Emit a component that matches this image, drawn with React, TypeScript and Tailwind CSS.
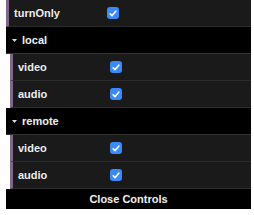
import React from 'react'

function Check() {
  return (
    <div className="w-[12px] h-[12px] rounded-[3px] bg-[#3b8af7] flex items-center justify-center">
      <svg width="8" height="7" viewBox="0 0 8 7" fill="none">
        <path d="M1.2 3.8 L3.1 5.6 L6.8 1.2" stroke="white" strokeWidth="1.6" strokeLinecap="round" strokeLinejoin="round" />
      </svg>
    </div>
  )
}

function BoolRow({ label }: { label: string }) {
  return (
    <div className="h-[27px] flex items-center bg-[#1a1a1a] border-b border-b-[#2c2c2c] border-l-[3px] border-l-[#806787] pl-[5px] pr-[4px]">
      <span className="w-[40%] shrink-0">{label}</span>
      <Check />
    </div>
  )
}

function Folder({ title, items }: { title: string; items: string[] }) {
  return (
    <div>
      <div className="h-[27px] flex items-center bg-black border-b border-b-white/20 pl-[6px]">
        <svg width="5" height="3" viewBox="0 0 5 3" className="mt-[1px]">
          <path d="M0 0 L5 0 L2.5 3 Z" fill="#ddd" />
        </svg>
        <span className="ml-[5px]">{title}</span>
      </div>
      <div className="pl-[4px]">
        {items.map((item) => (
          <BoolRow key={item} label={item} />
        ))}
      </div>
    </div>
  )
}

export default function App() {
  return (
    <div className="min-h-screen bg-white">
      <div className="w-[245px] ml-[6px] font-['Liberation_Sans',Arial,sans-serif] font-bold text-[11px] text-[#eee] [text-shadow:0_-1px_0_#111]">
        <BoolRow label="turnOnly" />
        <Folder title="local" items={['video', 'audio']} />
        <Folder title="remote" items={['video', 'audio']} />
        <div className="h-[20px] bg-black flex items-center justify-center">Close Controls</div>
      </div>
    </div>
  )
}
